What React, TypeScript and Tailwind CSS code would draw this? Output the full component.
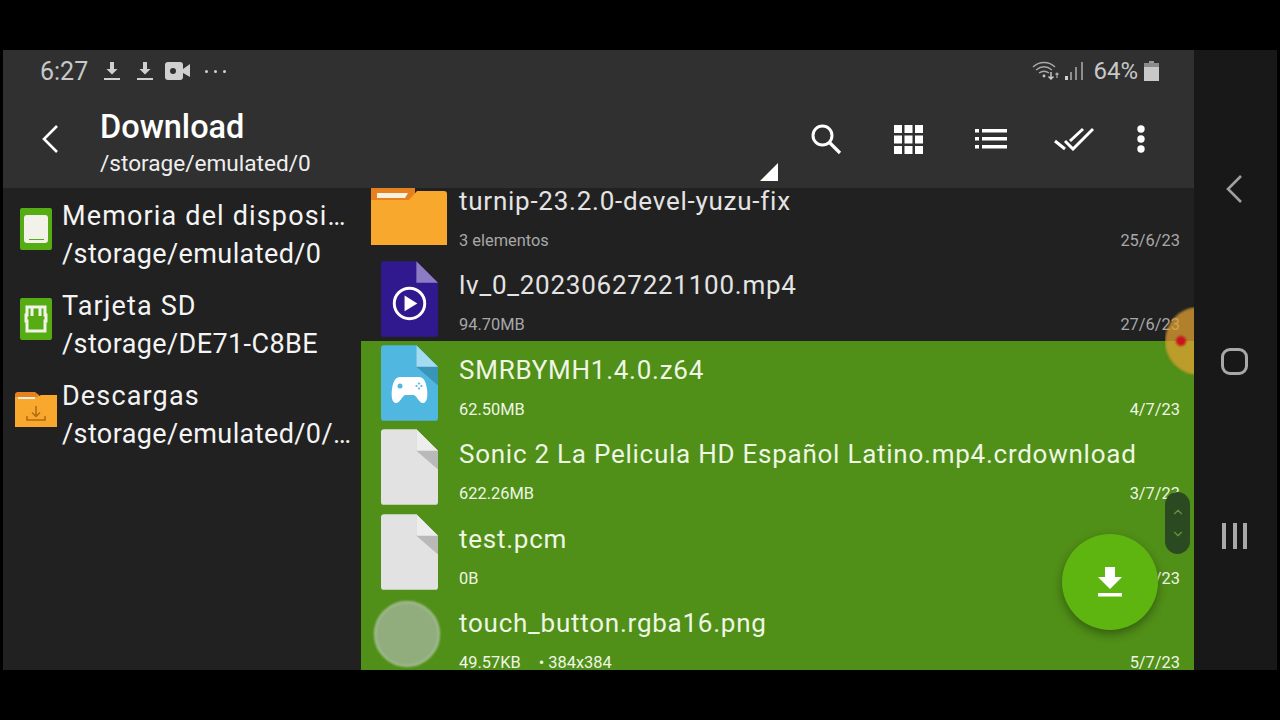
import { ChevronUp, ChevronDown } from "lucide-react";

const sides = [
  { name: "Memoria del disposi…", path: "/storage/emulated/0", icon: "memory" },
  { name: "Tarjeta SD", path: "/storage/DE71-C8BE", icon: "sd" },
  { name: "Descargas", path: "/storage/emulated/0/…", icon: "downloads" },
];

// the first and last rows are only partly on screen, so they are shorter
const files = [
  { name: "turnip-23.2.0-devel-yuzu-fix", size: "3 elementos", date: "25/6/23", icon: "folder", on: false, row: "h-[68.4px]", text: "pt-0" },
  { name: "lv_0_20230627221100.mp4", size: "94.70MB", date: "27/6/23", icon: "video", on: false, row: "h-[84.4px]", text: "pt-[16px]" },
  { name: "SMRBYMH1.4.0.z64", size: "62.50MB", date: "4/7/23", icon: "game", on: true, row: "h-[84.4px]", text: "pt-[16px]" },
  { name: "Sonic 2 La Pelicula HD Español Latino.mp4.crdownload", size: "622.26MB", date: "3/7/23", icon: "file", on: true, row: "h-[84.4px]", text: "pt-[16px]" },
  { name: "test.pcm", size: "0B", date: "5/7/23", icon: "file", on: true, row: "h-[84.4px]", text: "pt-[16px]" },
  { name: "touch_button.rgba16.png", size: "49.57KB", extra: "384x384", date: "5/7/23", icon: "thumb", on: true, row: "h-[76px]", text: "pt-[16px]" },
];

function DocIcon({ body, fold, shade }: { body: string; fold: string; shade: string }) {
  return (
    <svg width="57" height="76" viewBox="0 0 58 77">
      <path d="M3 0H36L58 22V74a3 3 0 0 1-3 3H3a3 3 0 0 1-3-3V3a3 3 0 0 1 3-3Z" fill={body} />
      <path d="M36 0L58 22V41L36 22Z" fill={shade} />
      <path d="M36 0L58 22H36Z" fill={fold} />
    </svg>
  );
}

function FileIcon({ kind }: { kind: string }) {
  if (kind === "folder") {
    return (
      <svg className="self-start" width="76" height="57" viewBox="0 0 76 57">
        <path d="M0 0H44V14H0Z" fill="#e5811f" />
        <path d="M0 12H38L46 3H73a3 3 0 0 1 3 3V57H0Z" fill="#f8a82c" />
        <path d="M6 5H37L34 10H6Z" fill="#f8f1df" />
      </svg>
    );
  }
  if (kind === "video") {
    return (
      <svg width="57" height="76" viewBox="0 0 58 77">
        <path d="M3 0H36L58 22V74a3 3 0 0 1-3 3H3a3 3 0 0 1-3-3V3a3 3 0 0 1 3-3Z" fill="#30188f" />
        <path d="M36 0L58 22H36Z" fill="#8c7cc6" />
        <circle cx="29" cy="43" r="15.5" fill="none" stroke="white" strokeWidth="3" />
        <path d="M24 35L37 43L24 51Z" fill="white" />
      </svg>
    );
  }
  if (kind === "game") {
    return (
      <div className="relative">
        <DocIcon body="#4fb7e0" fold="#a3dcf0" shade="#3a94b8" />
        <svg className="absolute left-[10px] top-[31px]" width="37" height="28" viewBox="0 0 37 28">
          <path
            d="M9 1H28C33 1 35 6 36 13C37 20 36 27 32 27C28 27 26 20 23 19H14C11 20 9 27 5 27C1 27 0 20 1 13C2 6 4 1 9 1Z"
            fill="white"
          />
          <circle cx="9" cy="10" r="2.5" fill="#4fb7e0" />
          <circle cx="28" cy="7.5" r="1.1" fill="#4fb7e0" />
          <circle cx="28" cy="12.5" r="1.1" fill="#4fb7e0" />
          <circle cx="25.5" cy="10" r="1.1" fill="#4fb7e0" />
          <circle cx="30.5" cy="10" r="1.1" fill="#4fb7e0" />
        </svg>
      </div>
    );
  }
  if (kind === "thumb") {
    return (
      <div className="w-[66px] h-[66px] rounded-full bg-[#92ad7d] border-2 border-[#a9c098] blur-[1px] mt-[4px] -ml-[4px]" />
    );
  }
  return <DocIcon body="#e2e2e2" fold="#ededed" shade="#b9b9b9" />;
}

function SideIcon({ kind }: { kind: string }) {
  if (kind === "downloads") {
    return (
      <svg width="42" height="35" viewBox="0 0 42 35">
        <path d="M0 3a3 3 0 0 1 3-3H20L24 3V8H0Z" fill="#e5811f" />
        <path d="M0 5H22L26 3H42V35H0Z" fill="#f8a82c" />
        <path d="M3 5H20V7H3Z" fill="#f6efe0" />
        <path d="M21 14V24M17 20.5L21 24.5L25 20.5M12 24V28H30V24" stroke="#b06b12" strokeWidth="1.5" fill="none" />
      </svg>
    );
  }
  return (
    <div className="w-[32px] h-[42px] rounded-[2px] bg-[#55ad13] flex items-center justify-center mr-[5px]">
      {kind === "memory" ? (
        <div className="w-[24px] h-[28px] rounded-[3px] bg-[#f2f2ea] flex items-end justify-center pb-[3px]">
          <div className="w-[15px] h-[1px] bg-[#55ad13]" />
        </div>
      ) : (
        <svg width="24" height="30" viewBox="0 0 24 30" fill="none" stroke="#f2f2ea" strokeWidth="3">
          <path d="M3 3H21V11H22V17H21V27H3V17H2V11H3Z" />
          <path d="M8 3V12M16 3V12" />
        </svg>
      )}
    </div>
  );
}

function StatusDownload() {
  return (
    <svg width="16" height="20" viewBox="0 0 16 20" fill="#d0d0d0">
      <path d="M6 1H10V8H13.5L8 13.5L2.5 8H6Z" />
      <rect x="0" y="17" width="16" height="2" />
    </svg>
  );
}

function BackArrow({ color, className }: { color: string; className: string }) {
  return (
    <svg className={className} width="18" height="30" viewBox="0 0 18 30" fill="none" stroke={color} strokeWidth="2.6">
      <path d="M16 2L3 15L16 28" />
    </svg>
  );
}

export default function App() {
  return (
    <div className="w-[1280px] h-[720px] bg-black overflow-hidden pt-[50px] pl-[3px] pr-[3px] font-['Roboto',sans-serif]">
      <div className="h-[620px] flex">
        <div className="w-[1191px] flex flex-col relative">
          {/* Header */}
          <header className="h-[138px] shrink-0 bg-[#303030]">
            <div className="h-[42px] flex items-center pl-[37px] pr-[35px] text-[#c8c8c8]">
              <span className="text-[25px] leading-none mr-[16px]">6:27</span>
              <StatusDownload />
              <span className="w-[17px]" />
              <StatusDownload />
              <svg className="ml-[12px]" width="25" height="20" viewBox="0 0 25 20" fill="#d0d0d0">
                <rect x="0" y="1" width="18" height="18" rx="3" />
                <path d="M18 8L25 3V16L18 12Z" />
                <circle cx="8" cy="10" r="3" fill="#303030" />
              </svg>
              <span className="ml-[15px] flex gap-[6px]">
                <i className="w-[3px] h-[3px] rounded-full bg-[#d0d0d0]" />
                <i className="w-[3px] h-[3px] rounded-full bg-[#d0d0d0]" />
                <i className="w-[3px] h-[3px] rounded-full bg-[#d0d0d0]" />
              </span>
              <span className="flex-1" />
              <svg width="27" height="20" viewBox="0 0 27 20" fill="none" stroke="#a8a8a8">
                <path d="M1 6C7 0 17 0 23 6M4 9C9 5 15 5 20 9M7 12C10 10 14 10 17 12" strokeWidth="1.4" />
                <circle cx="12" cy="15" r="1.4" fill="#c8c8c8" stroke="none" />
                <path d="M19 11V18M16.5 15.5L19 18L21.5 15.5" stroke="#d0d0d0" strokeWidth="1.4" />
                <path d="M25 17V12M23.5 13.5L25 12L26.5 13.5" strokeWidth="1.2" />
              </svg>
              <svg className="ml-[6px]" width="19" height="20" viewBox="0 0 19 20" fill="#8e8e8e">
                <rect x="0" y="15" width="3" height="4" fill="#d0d0d0" />
                <rect x="5" y="11" width="2" height="8" />
                <rect x="10" y="6" width="2" height="13" />
                <rect x="16" y="1" width="2" height="18" />
              </svg>
              <span className="text-[24px] leading-none ml-[9px]">64%</span>
              <svg className="ml-[6px]" width="15" height="20" viewBox="0 0 15 20" fill="#c8c8c8">
                <rect x="5" y="0" width="5" height="3" fill="#9a9a9a" />
                <rect x="0" y="2" width="15" height="4" fill="#8a8a8a" />
                <rect x="0" y="6" width="15" height="14" />
              </svg>
            </div>
            <div className="flex items-start">
              <BackArrow color="white" className="ml-[38px] mt-[32px]" />
              <div className="ml-[41px] mt-[16px]">
                <div className="text-[32.5px] leading-[38px] font-medium text-white">Download</div>
                <div className="text-[22.6px] leading-[26px] mt-[5px] text-[#eeeeee]">/storage/emulated/0</div>
              </div>
              <div className="ml-auto flex items-center h-[48px] mt-[23px] text-white">
                <svg width="32" height="32" viewBox="0 0 32 32" fill="none" stroke="white">
                  <circle cx="12.5" cy="12.5" r="9.5" strokeWidth="3" />
                  <path d="M19.5 19.5L30 30" strokeWidth="3.2" />
                </svg>
                <svg className="ml-[52px]" width="29" height="29" viewBox="0 0 29 29" fill="white">
                  {[0, 10.5, 21].map((x) =>
                    [0, 10.5, 21].map((y) => <rect key={`${x}-${y}`} x={x} y={y} width="8" height="8" />)
                  )}
                </svg>
                <svg className="ml-[52px]" width="32" height="20" viewBox="0 0 32 20" fill="white">
                  <rect x="0" y="0" width="4" height="3.5" />
                  <rect x="7" y="0" width="25" height="3.5" />
                  <rect x="0" y="8" width="4" height="3.5" />
                  <rect x="7" y="8" width="25" height="3.5" />
                  <rect x="0" y="16" width="4" height="3.5" />
                  <rect x="7" y="16" width="25" height="3.5" />
                </svg>
                <svg className="ml-[47px]" width="40" height="24" viewBox="0 0 40 24" fill="none" stroke="white" strokeWidth="3">
                  <path d="M1 14L11 22M11 14L19 22L39 2M16 14L29 2" />
                </svg>
                <svg className="ml-[43px] mr-[49px]" width="8" height="28" viewBox="0 0 8 28" fill="white">
                  <circle cx="4" cy="4" r="3.7" />
                  <circle cx="4" cy="14" r="3.7" />
                  <circle cx="4" cy="24" r="3.7" />
                </svg>
              </div>
            </div>
          </header>

          {/* Body */}
          <div className="flex-1 flex min-h-0 bg-[#212121]">
            <aside className="w-[358px] shrink-0 pt-[9px]">
              {sides.map((s) => (
                <div key={s.name} className="h-[90px] flex">
                  <div className="w-[59px] shrink-0 flex items-center justify-end pr-[5px] pb-[26px]">
                    <SideIcon kind={s.icon} />
                  </div>
                  <div className="text-[27px] leading-[38px] text-[#f4f4f4] whitespace-nowrap tracking-[0.4px]">
                    <div className="tracking-[1.15px]">{s.name}</div>
                    <div>{s.path}</div>
                  </div>
                </div>
              ))}
            </aside>

            <main className="flex-1 min-w-0">
              {files.map((f) => (
                <div
                  key={f.name}
                  className={`${f.row} flex relative ${f.on ? "bg-[#508f18] text-[#eef6e4]" : "text-[#e4e4e4]"}`}
                >
                  <div className="w-[98px] shrink-0 flex items-center justify-center pr-[2px]">
                    <FileIcon kind={f.icon} />
                  </div>
                  <div className={`flex-1 min-w-0 pr-[14px] ${f.text}`}>
                    <div className="text-[26px] leading-[26px] whitespace-nowrap tracking-[0.75px]">{f.name}</div>
                    <div className="flex justify-between items-center mt-[20px] text-[16.4px] leading-[14px]">
                      <span className={f.on ? "" : "text-[#a8a8a8]"}>
                        {f.size}
                        {f.extra && <span className="ml-[18px]">• {f.extra}</span>}
                      </span>
                      <span className={f.on ? "" : "text-[#a8a8a8]"}>{f.date}</span>
                    </div>
                  </div>
                </div>
              ))}
            </main>
          </div>

          {/* Sort corner */}
          <div className="absolute left-[757px] top-[113px] w-0 h-0 border-b-[18px] border-b-white border-l-[18px] border-l-transparent" />

          {/* Floating ball */}
          <div className="absolute right-0 top-[257px] w-[29px] h-[68px] overflow-hidden">
            <div className="w-[68px] h-[68px] rounded-full bg-[#e0a030]/75 blur-[1px] flex items-center pl-[11px]">
              <div className="w-[10px] h-[10px] rounded-full bg-[#c8141a]" />
            </div>
          </div>

          {/* Scroller */}
          <div className="absolute right-[4px] top-[442px] w-[25px] h-[62px] rounded-full bg-[#2c4a22] flex flex-col items-center justify-center gap-[8px] text-[#5f9a3a]">
            <ChevronUp size={14} />
            <ChevronDown size={14} />
          </div>

          {/* FAB */}
          <div className="absolute left-[1059px] top-[484px] w-[96px] h-[96px] rounded-full bg-[#5fb50f] shadow-[0_4px_10px_rgba(0,0,0,0.35)] flex items-center justify-center">
            <svg width="26" height="30" viewBox="0 0 26 30" fill="white">
              <path d="M8 0H18V10H25L13 22L1 10H8Z" />
              <rect x="1" y="26" width="24" height="3.5" />
            </svg>
          </div>
        </div>

        {/* Android nav */}
        <nav className="flex-1 bg-[#181818] flex flex-col items-center text-[#a8a8a8]">
          <BackArrow color="#a0a0a0" className="mt-[124px] -ml-[4px]" />
          <div className="mt-[144px] -ml-[2px] w-[27px] h-[27px] rounded-[9px] border-[3px] border-[#a8a8a8]" />
          <div className="mt-[148px] -ml-[2px] flex gap-[6.5px]">
            <i className="w-[4px] h-[26px] bg-[#a8a8a8]" />
            <i className="w-[4px] h-[26px] bg-[#a8a8a8]" />
            <i className="w-[4px] h-[26px] bg-[#a8a8a8]" />
          </div>
        </nav>
      </div>
    </div>
  );
}
